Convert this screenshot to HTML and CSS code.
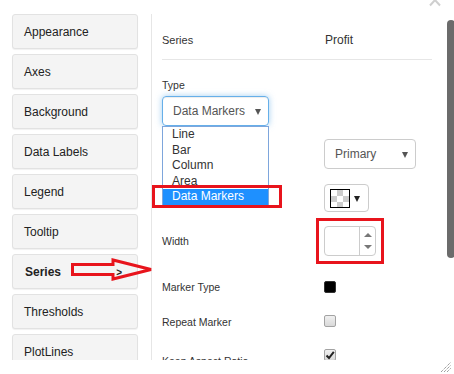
FILE: index.html
```html
<!DOCTYPE html>
<html>
<head>
    <title>Chart Format - Series</title>
    <link rel="stylesheet" href="styles.css">
</head>
<body>
    <div class="dialog">
        <div class="frame">
            <nav class="sidebar">
                <div class="nav-btn">Appearance</div>
                <div class="nav-btn">Axes</div>
                <div class="nav-btn">Background</div>
                <div class="nav-btn">Data Labels</div>
                <div class="nav-btn">Legend</div>
                <div class="nav-btn">Tooltip</div>
                <div class="nav-btn active">Series <span class="nav-mark">&gt;</span></div>
                <div class="nav-btn">Thresholds</div>
                <div class="nav-btn">PlotLines</div>
            </nav>

            <section class="panel">
                <div class="panel-head">
                    <span class="col-label">Series</span>
                    <span class="col-value">Profit</span>
                </div>

                <div class="type-field">
                    <div class="field-label">Type</div>
                    <div class="select select-type focused">Data Markers <span class="caret"></span></div>
                </div>

                <!-- labels of the next two rows sit under the open list -->
                <div class="row row-control">
                    <span class="field-label col-label"></span>
                    <div class="select select-axis">Primary <span class="caret"></span></div>
                </div>

                <div class="row row-color">
                    <span class="field-label col-label"></span>
                    <div class="color-btn">
                        <span class="swatch"></span>
                        <span class="caret dark"></span>
                    </div>
                </div>

                <div class="row row-control">
                    <span class="field-label col-label">Width</span>
                    <div class="spinner">
                        <span class="spin-value"></span>
                        <span class="spin-buttons">
                            <span class="spin-up"></span>
                            <span class="spin-down"></span>
                        </span>
                    </div>
                </div>

                <div class="row row-check first-check">
                    <span class="field-label col-label">Marker Type</span>
                    <span class="marker-box"></span>
                </div>

                <div class="row row-check">
                    <span class="field-label col-label lower-1">Repeat Marker</span>
                    <span class="checkbox"></span>
                </div>

                <div class="row row-check">
                    <span class="field-label col-label lower-2">Keep Aspect Ratio</span>
                    <span class="checkbox checked">
                        <svg width="10" height="10" viewBox="0 0 10 10"><path d="M1.5 5.5 L4 8 L8.8 1.8" fill="none" stroke="#222" stroke-width="2"/></svg>
                    </span>
                </div>
            </section>
        </div>

        <!-- open list of the Type select -->
        <ul class="dropdown">
            <li>Line</li>
            <li>Bar</li>
            <li>Column</li>
            <li>Area</li>
            <li class="selected">Data Markers</li>
        </ul>

        <!-- annotations -->
        <div class="mark-box mark-option"></div>
        <div class="mark-box mark-width"></div>
        <svg class="mark-arrow" width="160" height="30" viewBox="0 0 160 30">
            <polygon points="72.5,9.5 113,9.5 113,5 151,14.5 113,24 113,19.5 72.5,19.5" fill="none" stroke="#e8141c" stroke-width="3"/>
        </svg>

        <svg class="close-x" width="16" height="8" viewBox="0 0 16 8">
            <polyline points="3,6.5 8,1 13,6.5" fill="none" stroke="#cfcfcf" stroke-width="2"/>
        </svg>
        <div class="scroll-thumb"></div>
        <svg class="grip" width="14" height="14" viewBox="0 0 14 14">
            <path d="M2 12 L12 2 M5 12 L12 5 M8 12 L12 8" stroke="#777" stroke-width="1" stroke-dasharray="1 1"/>
        </svg>
    </div>
</body>
</html>
```

FILE: styles.css
```css
body {
    margin: 0;
    background-color: #fff;
    font-family: "Liberation Sans", Arial, sans-serif;
    color: #333;
}

.dialog {
    position: relative;
    width: 454px;
    height: 374px;
    overflow: hidden;
}

.frame {
    display: flex;
    margin-top: 14px;
    height: 346px;
    overflow: hidden;
}

/* left navigation */
.sidebar {
    width: 151px;
    flex: none;
    padding-left: 12px;
    box-sizing: border-box;
    display: flex;
    flex-direction: column;
    gap: 5px;
}

.nav-btn {
    width: 126px;
    height: 35px;
    flex: none;
    box-sizing: border-box;
    display: flex;
    align-items: center;
    justify-content: space-between;
    padding: 0 15px 0 11px;
    background-color: #f4f4f4;
    border: 1px solid #e2e2e2;
    border-radius: 3px;
    box-shadow: 0 1px 1px rgba(0, 0, 0, 0.06);
    font-size: 12px;
    color: #222;
}

.nav-btn.active {
    font-weight: bold;
    padding-left: 12px;
}

.nav-mark {
    font-size: 10px;
    font-weight: bold;
    margin-top: 1px;
}

/* right panel */
.panel {
    width: 281px;
    flex: none;
    box-sizing: border-box;
    border-left: 1px solid #e6e6e6;
    padding-left: 10px;
}

.panel-head {
    display: flex;
    padding: 20px 0 12px;
    border-bottom: 1px solid #e6e6e6;
    line-height: 13px;
}

.col-label {
    width: 162px;
    flex: none;
}

.panel-head .col-label {
    font-size: 11px;
}

.col-value {
    font-size: 12px;
    padding-left: 1px;
}

.field-label {
    font-size: 10.5px;
    line-height: 13px;
    color: #333;
}

.lower-1 {
    padding-top: 3px;
}

.lower-2 {
    padding-top: 12px;
}

.type-field {
    padding-top: 19px;
}

.select {
    position: relative;
    height: 30px;
    box-sizing: border-box;
    border: 1px solid #ccc;
    border-radius: 4px;
    padding-left: 10px;
    display: flex;
    align-items: center;
    font-size: 12px;
    color: #555;
}

.select-type {
    width: 107px;
    margin-top: 4px;
}

.select.focused {
    border-color: #66afe9;
    box-shadow: inset 0 1px 1px rgba(0, 0, 0, 0.075), 0 0 6px rgba(102, 175, 233, 0.6);
}

.select-axis {
    width: 92px;
}

.caret {
    position: absolute;
    right: 7px;
    top: 12px;
    width: 0;
    height: 0;
    border-left: 3px solid transparent;
    border-right: 3px solid transparent;
    border-top: 6px solid #555;
}

.row {
    display: flex;
    align-items: center;
}

.row-control {
    height: 44px;
}

.type-field + .row {
    margin-top: 6px;
}

.row-color {
    height: 43px;
}

.color-btn {
    position: relative;
    width: 45px;
    height: 28px;
    box-sizing: border-box;
    border: 1px solid #ccc;
    border-radius: 4px;
    padding: 4px 0 0 5px;
}

.swatch {
    display: block;
    width: 20px;
    height: 19px;
    box-sizing: border-box;
    border: 1px solid #000;
    background: repeating-conic-gradient(#cdcdcd 0 25%, #fff 0 50%) 0 0 / 12px 12px;
}

.color-btn .caret {
    top: 11px;
    right: 8px;
}

.caret.dark {
    border-top-color: #222;
}

.spinner {
    display: flex;
    width: 52px;
    height: 30px;
    box-sizing: border-box;
    border: 1px solid #ccc;
    border-radius: 4px;
}

.spin-value {
    width: 34px;
}

.spin-buttons {
    flex: 1;
    border-left: 1px solid #ccc;
    display: flex;
    flex-direction: column;
    align-items: center;
    justify-content: center;
    gap: 8px;
}

.spin-up,
.spin-down {
    width: 0;
    height: 0;
    border-left: 4px solid transparent;
    border-right: 4px solid transparent;
}

.spin-up {
    border-bottom: 4px solid #777;
}

.spin-down {
    border-top: 4px solid #777;
}

.row-check {
    height: 34px;
}

.first-check {
    margin-top: 7px;
}

.marker-box {
    width: 12px;
    height: 12px;
    box-sizing: border-box;
    background-color: #000;
    border: 1px solid #333;
    border-radius: 2px;
}

.checkbox {
    width: 12px;
    height: 12px;
    box-sizing: border-box;
    border: 1px solid #a3a3a3;
    border-radius: 2px;
    background: linear-gradient(#f0f0f0, #d9d9d9);
    display: flex;
    align-items: center;
    justify-content: center;
}

/* open select list */
.dropdown {
    position: absolute;
    left: 162px;
    top: 126px;
    width: 107px;
    box-sizing: border-box;
    margin: 0;
    padding: 0;
    list-style: none;
    background-color: #fff;
    border: 1px solid #7ea6dc;
    font-size: 12px;
    line-height: 15.5px;
    color: #333;
}

.dropdown li {
    padding-left: 9px;
}

.dropdown li.selected {
    background-color: #1e90ff;
    color: #fff;
}

/* red annotations */
.mark-box {
    position: absolute;
    box-sizing: border-box;
    border: 3px solid #e8141c;
}

.mark-option {
    left: 152px;
    top: 185px;
    width: 130px;
    height: 23px;
}

.mark-width {
    left: 316px;
    top: 218px;
    width: 68px;
    height: 46px;
}

.mark-arrow {
    position: absolute;
    left: 0;
    top: 255px;
}

.close-x {
    position: absolute;
    left: 427px;
    top: -1px;
}

.scroll-thumb {
    position: absolute;
    left: 447px;
    top: 20px;
    width: 8px;
    height: 238px;
    border-radius: 4px;
    background-color: #6b6b6b;
}

.grip {
    position: absolute;
    left: 439px;
    top: 360px;
}
```
